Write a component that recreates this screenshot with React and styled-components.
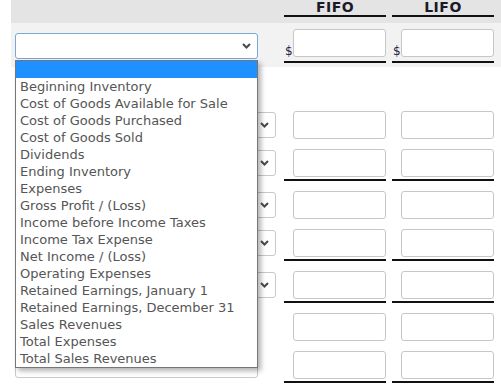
import React from "react";
import styled, { createGlobalStyle } from "styled-components";

const GlobalStyle = createGlobalStyle`
  html, body {
    margin: 0;
    padding: 0;
    background: #fff;
    font-family: "DejaVu Sans", Verdana, sans-serif;
  }
`;

const options = [
  "",
  "Beginning Inventory",
  "Cost of Goods Available for Sale",
  "Cost of Goods Purchased",
  "Cost of Goods Sold",
  "Dividends",
  "Ending Inventory",
  "Expenses",
  "Gross Profit / (Loss)",
  "Income before Income Taxes",
  "Income Tax Expense",
  "Net Income / (Loss)",
  "Operating Expenses",
  "Retained Earnings, January 1",
  "Retained Earnings, December 31",
  "Sales Revenues",
  "Total Expenses",
  "Total Sales Revenues",
];

const rows = [
  { select: 261, lined: false },
  { select: 261, lined: true },
  { select: 261, lined: false },
  { select: 261, lined: true },
  { select: 261, lined: true },
  { select: 243, lined: false },
  { select: 243, lined: true },
];

function Chevron() {
  return (
    <svg width="9" height="6" viewBox="0 0 9 6">
      <polyline points="1,1 4.5,4.5 8,1" fill="none" stroke="#4a4a4a" strokeWidth="2" />
    </svg>
  );
}

function Amount({ dollar, lined, first }) {
  return (
    <AmountCell $first={first}>
      <AmountInner $lined={lined} $first={first}>
        <Dollar>{dollar ? "$" : ""}</Dollar>
        <Input />
      </AmountInner>
    </AmountCell>
  );
}

function App() {
  return (
    <>
      <GlobalStyle />
      <Page>
        <Sheet>
          <Row $bg="#e4e4e4">
            <div />
            <HeadCell>FIFO</HeadCell>
            <HeadCell>LIFO</HeadCell>
          </Row>
          <Row $bg="#f2f2f2">
            <LabelCell $top={10}>
              <Select $width={243} $focused>
                <Chevron />
              </Select>
            </LabelCell>
            <Amount dollar lined first />
            <Amount dollar lined first />
          </Row>
          <Spacer />
          {rows.map((r, i) => (
            <Row key={i}>
              <LabelCell $top={6}>
                <Select $width={r.select}>
                  <Chevron />
                </Select>
              </LabelCell>
              <Amount lined={r.lined} />
              <Amount lined={r.lined} />
            </Row>
          ))}
        </Sheet>
        <Dropdown>
          {options.map((o, i) => (
            <Option key={i} $active={i === 0}>
              {o}
            </Option>
          ))}
        </Dropdown>
      </Page>
    </>
  );
}

const Page = styled.div`
  position: relative;
  height: 386px;
  overflow: hidden;
`;

const Sheet = styled.div`
  margin-left: 11px;
  width: 490px;
`;

const Row = styled.div`
  display: grid;
  grid-template-columns: 267px 102px 102px;
  column-gap: 6px;
  padding-right: 7px;
  background: ${(p) => p.$bg || "#fff"};
`;

const Spacer = styled.div`
  height: 39px;
`;

const HeadCell = styled.div`
  height: 15px;
  line-height: 15px;
  margin-bottom: 6px;
  border-bottom: 2px solid #111;
  text-align: center;
  font-size: 14px;
  font-weight: 700;
  letter-spacing: 0.5px;
  color: #1a1a28;
`;

const LabelCell = styled.div`
  padding-top: ${(p) => p.$top}px;
  padding-left: 4px;
`;

const Select = styled.div`
  box-sizing: border-box;
  width: ${(p) => p.$width}px;
  height: 26px;
  display: flex;
  align-items: center;
  justify-content: flex-end;
  padding-right: 6px;
  background: #fff;
  border: 1px solid ${(p) => (p.$focused ? "#7aa7dc" : "#c9c9c9")};
  border-radius: 3px;
`;

const AmountCell = styled.div`
  padding: ${(p) => (p.$first ? "6px 0 4px" : "5px 0")};
`;

const AmountInner = styled.div`
  display: flex;
  align-items: flex-end;
  padding-bottom: ${(p) => (p.$lined ? (p.$first ? 4 : 2) : 0)}px;
  border-bottom: ${(p) => (p.$lined ? "2px solid #111" : "none")};
`;

const Dollar = styled.span`
  width: 9px;
  padding-left: 1px;
  box-sizing: border-box;
  font-size: 12px;
  line-height: 12px;
  color: #1e2440;
`;

const Input = styled.div`
  flex: 1;
  box-sizing: border-box;
  height: 28px;
  background: #fff;
  border: 1px solid #c6c6c6;
  border-radius: 3px;
`;

const Dropdown = styled.div`
  position: absolute;
  left: 15px;
  top: 60px;
  width: 243px;
  box-sizing: border-box;
  background: #fff;
  border: 1px solid #767676;
  box-shadow: 3px 3px 5px rgba(0, 0, 0, 0.3);
`;

const Option = styled.div`
  height: 17px;
  line-height: 17px;
  padding-left: 4px;
  font-size: 13px;
  white-space: nowrap;
  color: ${(p) => (p.$active ? "#fff" : "#555")};
  background: ${(p) => (p.$active ? "#1e90ff" : "#fff")};
`;

export default App;
